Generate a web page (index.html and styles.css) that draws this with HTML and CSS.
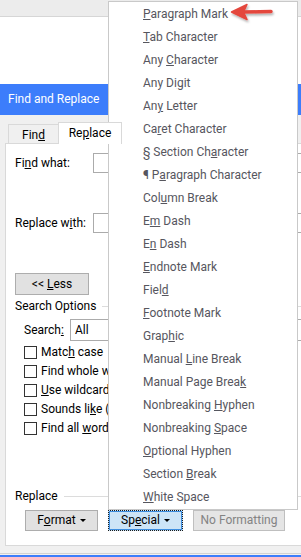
FILE: index.html
```html
<!DOCTYPE html>
<html>
<head>
<meta charset="utf-8">
<link rel="stylesheet" href="styles.css">
</head>
<body>
<div class="app">
  <div class="topbar"></div>
  <div class="doc"></div>
  <div class="dialog">
    <div class="titlebar">Find and Replace</div>
    <div class="dbody">
      <div class="tabs">
        <div class="tab">Fin<u>d</u></div>
        <div class="tab active">Re<u>p</u>lace</div>
      </div>
      <div class="panel">
        <div class="field first">
          <span class="lbl">Fi<u>n</u>d what:</span>
          <div class="input"></div>
        </div>
        <div class="field second">
          <span class="lbl">Replace w<u>i</u>th:</span>
          <div class="input"></div>
        </div>
        <div class="btn less">&lt;&lt; <u>L</u>ess</div>
        <div class="group opts"><span>Search Options</span></div>
        <div class="searchrow">
          <span class="slbl">Search<u>:</u></span>
          <div class="select">All</div>
        </div>
        <div class="checks">
          <div class="check"><span class="box"></span><span class="ctext">Matc<u>h</u> case</span></div>
          <div class="check"><span class="box"></span><span class="ctext">Find whole words onl<u>y</u></span></div>
          <div class="check"><span class="box"></span><span class="ctext"><u>U</u>se wildcards</span></div>
          <div class="check"><span class="box"></span><span class="ctext">Sounds li<u>k</u>e (English)</span></div>
          <div class="check"><span class="box"></span><span class="ctext">Find all <u>w</u>ord forms (English)</span></div>
        </div>
        <div class="group repl"><span>Replace</span></div>
        <div class="btnrow">
          <div class="btn fmt">F<u>o</u>rmat <span class="caret"></span></div>
          <div class="btn special">Sp<u>e</u>cial <span class="caret"></span></div>
          <div class="btn nofmt">No Formatting</div>
        </div>
      </div>
    </div>
    <div class="foot"></div>
  </div>

  <div class="menu">
    <div class="item"><u>P</u>aragraph Mark</div>
    <div class="item"><u>T</u>ab Character</div>
    <div class="item">Any <u>C</u>haracter</div>
    <div class="item">Any Di<u>g</u>it</div>
    <div class="item">An<u>y</u> Letter</div>
    <div class="item">Ca<u>r</u>et Character</div>
    <div class="item">§ Section Ch<u>a</u>racter</div>
    <div class="item">¶ P<u>a</u>ragraph Character</div>
    <div class="item">Col<u>u</u>mn Break</div>
    <div class="item">E<u>m</u> Dash</div>
    <div class="item">E<u>n</u> Dash</div>
    <div class="item"><u>E</u>ndnote Mark</div>
    <div class="item">Fiel<u>d</u></div>
    <div class="item"><u>F</u>ootnote Mark</div>
    <div class="item">Grap<u>h</u>ic</div>
    <div class="item">Manual <u>L</u>ine Break</div>
    <div class="item">Manual Page Brea<u>k</u></div>
    <div class="item">Nonbreaking <u>H</u>yphen</div>
    <div class="item">Nonbreaking <u>S</u>pace</div>
    <div class="item"><u>O</u>ptional Hyphen</div>
    <div class="item">Section <u>B</u>reak</div>
    <div class="item"><u>W</u>hite Space</div>
  </div>

  <svg class="arrow" width="50" height="24" viewBox="226 0 50 24">
    <defs>
      <filter id="sh" x="-20%" y="-40%" width="140%" height="180%">
        <feDropShadow dx="1" dy="2" stdDeviation="1" flood-color="#000" flood-opacity="0.3"/>
      </filter>
    </defs>
    <g filter="url(#sh)">
      <line x1="242" y1="12" x2="271" y2="11.5" stroke="#e4473d" stroke-width="3.5" stroke-linecap="round"/>
      <path d="M231.5 12 L247 4.5 L243.5 12 L247 19.5 Z" fill="#e4473d" stroke="#e4473d" stroke-width="1.5" stroke-linejoin="round"/>
    </g>
  </svg>
</div>
</body>
</html>
```

FILE: styles.css
```css
body {
  margin: 0;
  font-family: Roboto, "Noto Sans", sans-serif;
  font-size: 12px;
  color: #000;
}

.app {
  position: relative;
  width: 301px;
  height: 557px;
  overflow: hidden;
  background: #fff;
}

.topbar {
  height: 16px;
  background: #ececec;
  border-bottom: 1px solid #d6d6d6;
}

.doc {
  height: 67px;
  background: #fff;
}

.dialog {
  width: 340px;
}

.titlebar {
  height: 31px;
  line-height: 31px;
  background: #3c7dfb;
  color: #fff;
  padding-left: 8px;
}

.dbody {
  height: 438px;
  box-sizing: border-box;
  background: #f0f0f0;
  padding-top: 7px;
}

.tabs {
  display: flex;
  align-items: flex-end;
  height: 21px;
  padding-left: 8px;
  position: relative;
  z-index: 1;
}

.tab {
  box-sizing: border-box;
  height: 19px;
  width: 50px;
  border: 1px solid #d9d9d9;
  border-bottom: none;
  border-right: none;
  text-align: center;
  line-height: 21px;
}

.tab.active {
  height: 22px;
  width: 64px;
  margin-bottom: -1px;
  background: #fff;
  border-right: 1px solid #d9d9d9;
  line-height: 21px;
}

.panel {
  box-sizing: border-box;
  height: 403px;
  margin-left: 5px;
  background: #fff;
  border: 1px solid #d9d9d9;
  padding-left: 9px;
}

.field {
  display: flex;
  align-items: center;
  height: 20px;
}

.field.first { margin-top: 9px; }
.field.second { margin-top: 40px; }

.lbl {
  width: 78px;
  flex: none;
}

.input {
  box-sizing: border-box;
  height: 20px;
  flex: 1;
  border: 1px solid #ababab;
  background: #fff;
}

.btn {
  box-sizing: border-box;
  height: 21px;
  line-height: 19px;
  text-align: center;
  background: #e1e1e1;
  border: 1px solid #adadad;
  flex: none;
  white-space: nowrap;
}

.less {
  margin-top: 40px;
  width: 74px;
  height: 22px;
  line-height: 20px;
}

.group {
  display: flex;
  align-items: center;
  height: 14px;
}

.group::after {
  content: "";
  flex: 1;
  border-top: 1px solid #dcdcdc;
  margin-left: 6px;
}

.opts { margin-top: 4px; }
.repl { margin-top: 51px; }

.searchrow {
  display: flex;
  align-items: center;
  margin-top: 6px;
  height: 22px;
  padding-left: 9px;
}

.slbl {
  width: 46px;
  flex: none;
}

.select {
  box-sizing: border-box;
  flex: 1;
  height: 22px;
  line-height: 20px;
  border: 1px solid #ababab;
  padding-left: 4px;
}

.checks {
  margin-top: 2px;
  padding-left: 9px;
}

.check {
  display: flex;
  align-items: flex-start;
  width: 84px;
  height: 19px;
  overflow: hidden;
  white-space: nowrap;
}

.ctext {
  line-height: 18px;
}

.box {
  box-sizing: border-box;
  width: 13px;
  height: 13px;
  margin-top: 3px;
  margin-right: 4px;
  border: 1px solid #333;
  background: #fff;
  flex: none;
}

.btnrow {
  display: flex;
  gap: 10px;
  margin-top: 7px;
  padding-left: 10px;
}

.fmt { width: 73px; }

.special {
  width: 75px;
  background: #cce4f7;
  border: 1px dotted #1a1a1a;
  box-shadow: inset 0 0 0 1px #3d8ee0;
}

.nofmt {
  width: 92px;
  color: #838383;
  background: #e5e5e5;
  border-color: #bfbfbf;
}

.caret {
  display: inline-block;
  vertical-align: middle;
  width: 0;
  height: 0;
  margin-left: 1px;
  border-left: 3px solid transparent;
  border-right: 3px solid transparent;
  border-top: 3px solid #000;
}

.foot {
  height: 4px;
  box-sizing: border-box;
  background: #f0f0f0;
  border-top: 1px solid #d2d2d2;
  border-bottom: 2px solid #3c7dfb;
}

.menu {
  position: absolute;
  left: 108px;
  top: 1px;
  width: 190px;
  height: 509px;
  box-sizing: border-box;
  background: #fff;
  border: 1px solid #c9c9c9;
  padding-top: 1px;
  color: #56565e;
}

.item {
  height: 23px;
  line-height: 23px;
  padding-left: 34px;
  white-space: nowrap;
}

.arrow {
  position: absolute;
  left: 226px;
  top: 0;
}
```
